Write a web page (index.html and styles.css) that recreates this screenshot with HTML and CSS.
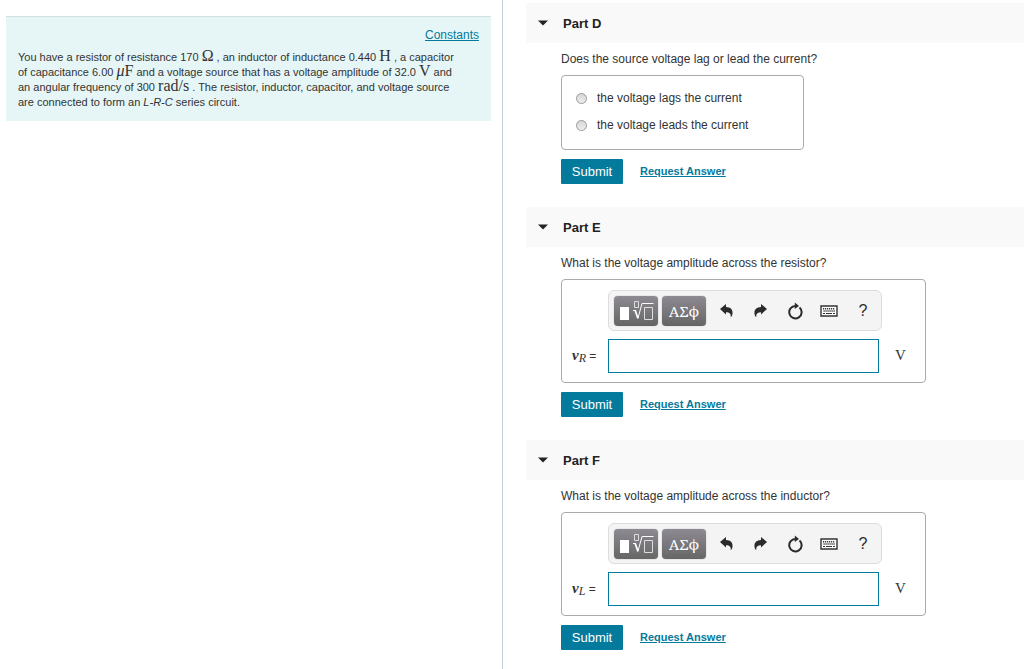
FILE: index.html
```html
<!DOCTYPE html>
<html lang="en">
<head>
<meta charset="utf-8">
<meta name="viewport" content="width=device-width, initial-scale=1">
<title>L-R-C series circuit</title>
<link rel="stylesheet" href="styles.css">
</head>
<body>
<svg width="0" height="0" class="sprite" aria-hidden="true">
  <symbol id="caret" viewBox="0 0 10 6"><path d="M0 .5h10L5 5.5z" fill="#222"/></symbol>
  <symbol id="root" viewBox="0 0 44 30">
    <path d="M6 11h9v13H6z" fill="#fff"/>
    <path d="M20.500 5.500h4v6h-4zM30.500 11.500h8v12h-8z" fill="none" stroke="#ddd"/>
    <path d="M19 14.500h2.500M24 22l4-14.500h11.500" fill="none" stroke="#fff"/>
    <path d="M21 14l3 8.500" fill="none" stroke="#fff" stroke-width="1.800"/>
  </symbol>
  <symbol id="undo" viewBox="0 0 14 14"><path d="M0 5L6 0v3c4.500.1 7 2.600 6.500 6.800-.2 1.400-.6 2.500-1.800 3.400.5-3.300-1-5-4.700-5V10.500z" fill="#2b2b2b"/></symbol>
  <symbol id="redo" viewBox="0 0 14 14"><path d="M13 5L7 0v3C2.500 3.100 0 5.600.5 9.800c.2 1.400.6 2.500 1.800 3.400C1.800 9.900 3.300 8.200 7 8.200v2.300z" fill="#2b2b2b"/></symbol>
  <symbol id="reset" viewBox="0 0 16 18"><path d="M12.500 5.500A6.200 6.200 0 1 1 8.500 4" fill="none" stroke="#2b2b2b" stroke-width="2"/><path d="M7.800.5L12 4 7.800 7z" fill="#2b2b2b"/></symbol>
  <symbol id="keyboard" viewBox="0 0 18 12"><path d="M1 1h16v10H1z" fill="#fff" stroke="#333" stroke-width="1.400"/><path d="M3 3.700h12M3.500 6h11.500" stroke="#333" stroke-width="1.400" stroke-dasharray="1.200 .8"/><path d="M3 8.500h2M6 8.500h6M13 8.500h2" stroke="#333" stroke-width="1.200"/></symbol>
</svg>
<main class="page">
  <aside class="intro">
    <section class="problem">
      <a class="constants" href="#constants">Constants</a>
      <p class="statement">You have a resistor of resistance 170 <span class="math">Ω</span> , an inductor of inductance 0.440 <span class="math">H</span> , a capacitor<br>of capacitance 6.00 <span class="math"><i>μ</i>F</span> and a voltage source that has a voltage amplitude of 32.0 <span class="math">V</span> and<br>an angular frequency of 300 <span class="math">rad/s</span> . The resistor, inductor, capacitor, and voltage source<br>are connected to form an <i>L-R-C</i> series circuit.</p>
    </section>
  </aside>
  <div class="parts">
    <section class="part">
      <h2 class="part-head"><button class="toggle" type="button" aria-expanded="true"><svg class="caret"><use href="#caret"/></svg>Part D</button></h2>
      <form class="part-body">
        <p class="question" id="qd">Does the source voltage lag or lead the current?</p>
        <div class="choices" role="radiogroup" aria-labelledby="qd">
          <label class="choice"><input class="radio" type="radio" name="phase">the voltage lags the current</label>
          <label class="choice"><input class="radio" type="radio" name="phase">the voltage leads the current</label>
        </div>
        <div class="actions"><button class="submit" type="button">Submit</button><a class="request" href="#answer-d">Request Answer</a></div>
      </form>
    </section>
    <section class="part">
      <h2 class="part-head"><button class="toggle" type="button" aria-expanded="true"><svg class="caret"><use href="#caret"/></svg>Part E</button></h2>
      <form class="part-body">
        <p class="question">What is the voltage amplitude across the resistor?</p>
        <div class="answer">
          <div class="toolbar">
            <button class="palette" type="button" aria-label="Templates"><svg class="root"><use href="#root"/></svg></button>
            <button class="palette" type="button">ΑΣϕ</button>
            <div class="tools">
              <button class="tool" type="button" aria-label="Undo"><svg class="arrow"><use href="#undo"/></svg></button>
              <button class="tool" type="button" aria-label="Redo"><svg class="arrow"><use href="#redo"/></svg></button>
              <button class="tool" type="button" aria-label="Reset"><svg class="reset"><use href="#reset"/></svg></button>
              <button class="tool" type="button" aria-label="Keyboard"><svg class="keyboard"><use href="#keyboard"/></svg></button>
              <button class="tool" type="button">?</button>
            </div>
          </div>
          <label class="variable" for="vr"><i>v<sub>R</sub></i> =</label>
          <input class="entry" id="vr" type="text">
          <span class="unit">V</span>
        </div>
        <div class="actions"><button class="submit" type="button">Submit</button><a class="request" href="#answer-e">Request Answer</a></div>
      </form>
    </section>
    <section class="part">
      <h2 class="part-head"><button class="toggle" type="button" aria-expanded="true"><svg class="caret"><use href="#caret"/></svg>Part F</button></h2>
      <form class="part-body">
        <p class="question">What is the voltage amplitude across the inductor?</p>
        <div class="answer">
          <div class="toolbar">
            <button class="palette" type="button" aria-label="Templates"><svg class="root"><use href="#root"/></svg></button>
            <button class="palette" type="button">ΑΣϕ</button>
            <div class="tools">
              <button class="tool" type="button" aria-label="Undo"><svg class="arrow"><use href="#undo"/></svg></button>
              <button class="tool" type="button" aria-label="Redo"><svg class="arrow"><use href="#redo"/></svg></button>
              <button class="tool" type="button" aria-label="Reset"><svg class="reset"><use href="#reset"/></svg></button>
              <button class="tool" type="button" aria-label="Keyboard"><svg class="keyboard"><use href="#keyboard"/></svg></button>
              <button class="tool" type="button">?</button>
            </div>
          </div>
          <label class="variable" for="vl"><i>v<sub>L</sub></i> =</label>
          <input class="entry" id="vl" type="text">
          <span class="unit">V</span>
        </div>
        <div class="actions"><button class="submit" type="button">Submit</button><a class="request" href="#answer-f">Request Answer</a></div>
      </form>
    </section>
  </div>
</main>
</body>
</html>
```
FILE: styles.css
```css
* {
  box-sizing: border-box;
}

body {
  margin: 0;
  background: #fff;
  color: #333;
  font: 12px/15px "Liberation Sans", Arial, sans-serif;
}

button {
  margin: 0;
  padding: 0;
  border: 0;
  background: none;
  color: inherit;
  font: inherit;
}

a {
  color: #047a9c;
}

.sprite {
  position: absolute;
}

.page {
  display: grid;
  grid-template-columns: 503fr 521fr;
  min-height: 100vh;
}

.intro {
  padding: 16px 11px 0 6px;
  border-right: 1px solid #bfd0dc;
}

.problem {
  display: flex;
  flex-direction: column;
  padding: 11px 12px;
  border-top: 1px solid #d5dfe0;
  background: #e6f6f7;
}

.constants {
  align-self: flex-end;
  margin-bottom: 7px;
}

.statement {
  margin: 0;
  font-size: 11px;
}

.math {
  font-family: "Liberation Serif", "Times New Roman", serif;
  font-size: 16px;
  line-height: 12px;
}

.parts {
  padding: 3px 0 0 23px;
}

.part {
  margin-bottom: 23px;
}

.part:last-child {
  margin-bottom: 0;
}

.part-head {
  margin: 0;
  background: #f9f9f9;
  color: #222;
  font-size: 13px;
}

.toggle {
  display: flex;
  align-items: center;
  gap: 15px;
  width: 100%;
  height: 40px;
  padding-left: 12px;
  font-weight: bold;
}

.caret {
  width: 10px;
  height: 6px;
}

.part-body {
  padding-left: 35px;
}

.question {
  margin: 0;
  padding: 9px 0 8px;
}

.choices {
  display: flex;
  flex-direction: column;
  gap: 12px;
  width: 243px;
  padding: 15px 14px 16px;
  border: 1px solid #aaa;
  border-radius: 4px;
}

.choice {
  display: flex;
  align-items: center;
  gap: 10px;
}

.radio {
  appearance: none;
  width: 11px;
  height: 11px;
  margin: 0;
  border: 1px solid #999;
  border-radius: 50%;
  background: linear-gradient(#d6d6d6, #eee);
}

.answer {
  display: grid;
  grid-template-columns: 26px 271px auto;
  gap: 8px 10px;
  align-items: center;
  justify-content: start;
  width: 365px;
  padding: 10px 10px 9px;
  border: 1px solid #aaa;
  border-radius: 4px;
}

.toolbar {
  display: flex;
  grid-column: 2;
  align-items: center;
  gap: 4px;
  width: 274px;
  height: 41px;
  padding-left: 5px;
  border: 1px solid #ddd;
  border-radius: 6px;
  background: #f4f4f4;
}

.palette {
  width: 44px;
  height: 30px;
  border-radius: 4px;
  background: linear-gradient(#8d8a92, #666);
  box-shadow: 0 0 1px #777;
  color: #fff;
  font: 15px/28px "Noto Serif", "DejaVu Serif", serif;
}

.tools {
  display: flex;
  gap: 4px;
  padding-left: 2px;
}

.tool {
  display: flex;
  align-items: center;
  justify-content: center;
  width: 30px;
  height: 30px;
  color: #2b2b2b;
  font-size: 16px;
}

.root {
  display: block;
  width: 44px;
  height: 30px;
}

.arrow {
  width: 14px;
  height: 14px;
}

.reset {
  width: 16px;
  height: 18px;
}

.keyboard {
  width: 18px;
  height: 12px;
}

.variable {
  grid-column: 1;
  white-space: nowrap;
}

.variable i {
  font: italic bold 15px/15px "Liberation Serif", "Times New Roman", serif;
}

.variable sub {
  font-size: 12px;
  font-weight: normal;
  line-height: 1px;
  vertical-align: -2px;
}

.entry {
  width: 100%;
  height: 34px;
  padding: 4px 8px;
  border: 1px solid #047a9c;
  background: #fff;
  font: inherit;
}

.unit {
  padding: 0 0 3px 6px;
  font: 15px/20px "Liberation Serif", "Times New Roman", serif;
}

.actions {
  display: flex;
  align-items: center;
  gap: 17px;
  margin-top: 9px;
}

.submit {
  width: 62px;
  height: 25px;
  border-radius: 1px;
  background: #047a9c;
  color: #fff;
  font-size: 13px;
}

.request {
  font-size: 11px;
  font-weight: bold;
}
```
